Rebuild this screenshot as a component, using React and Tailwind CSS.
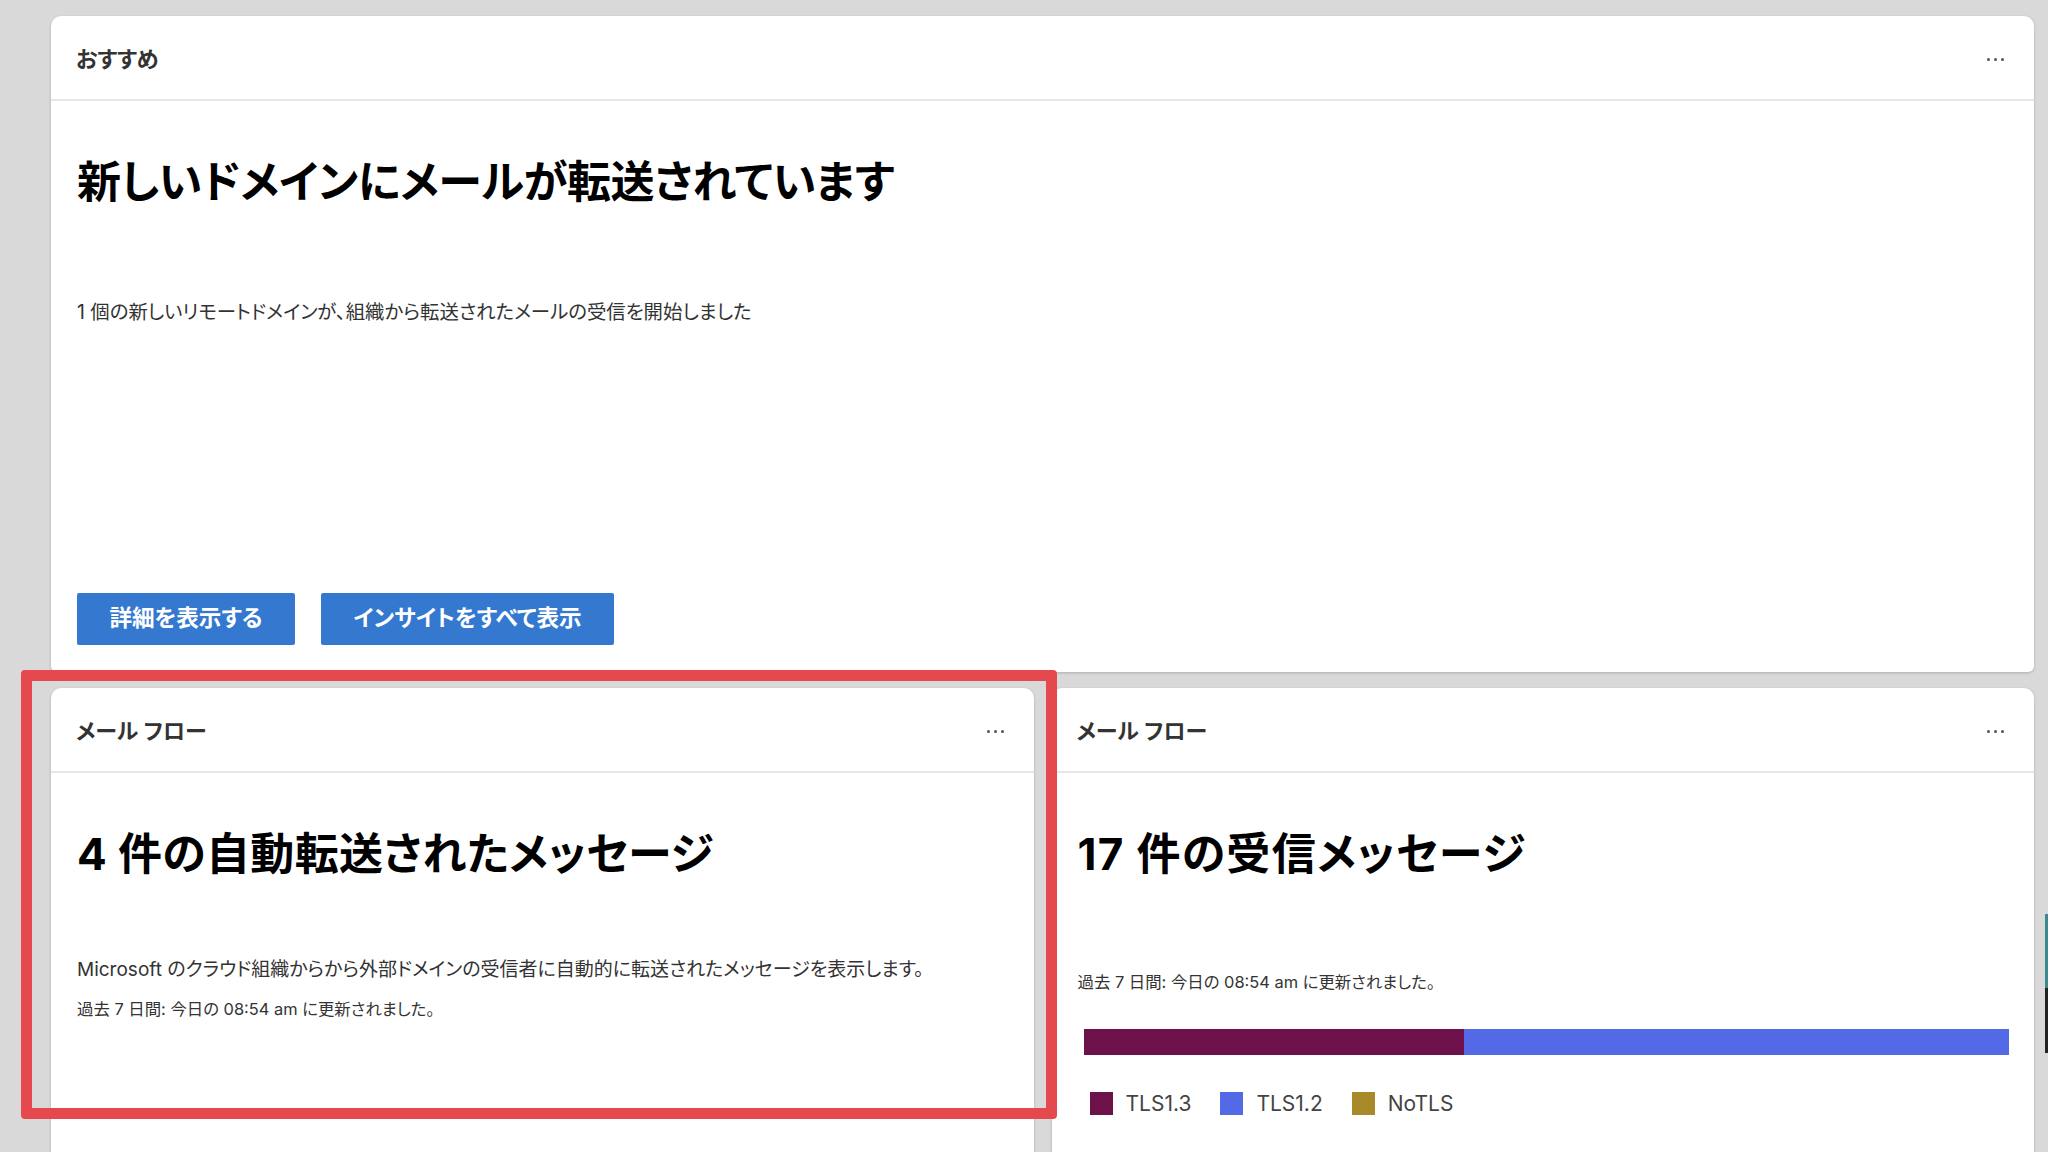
const FONT = "font-['Inter','Noto_Sans_CJK_JP',sans-serif] [font-feature-settings:'palt']"

function CardHeader({ title }) {
  return (
    <div className="flex h-[85px] shrink-0 items-center justify-between border-b-2 border-[#e8e8e8] pl-[25px] pr-[30px]">
      <h2 className="pt-[3px] text-[22px] leading-none font-bold text-[#333333]">{title}</h2>
      <div className="mt-[3px] flex gap-[4px]">
        <span className="h-[3px] w-[3px] rounded-full bg-[#555555]" />
        <span className="h-[3px] w-[3px] rounded-full bg-[#555555]" />
        <span className="h-[3px] w-[3px] rounded-full bg-[#555555]" />
      </div>
    </div>
  )
}

function Legend({ color, label }) {
  return (
    <div className="flex items-center gap-[13px]">
      <span className={`h-[23px] w-[23px] ${color}`} />
      <span className="text-[21px] leading-none text-[#444444]">{label}</span>
    </div>
  )
}

export default function App() {
  return (
    <div className={`relative h-screen overflow-hidden bg-[#d9d9d9] pt-[16px] pl-[51px] pr-[14px] ${FONT}`}>
      <section className="flex h-[656px] flex-col rounded-t-[10px] rounded-b-[6px] bg-white shadow-[0_1px_3px_rgba(0,0,0,0.2)]">
        <CardHeader title="おすすめ" />
        <div className="flex flex-1 flex-col pl-[26px]">
          <h1 className="mt-[55px] text-[44px] leading-[52px] font-bold tracking-[-0.4px] text-black">新しいドメインにメールが転送されています</h1>
          <p className="mt-[91px] text-[19.4px] leading-[26px] text-[#333333]">1 個の新しいリモートドメインが、組織から転送されたメールの受信を開始しました</p>
          <div className="mt-[268px] flex gap-[26px]">
            <button type="button" className="h-[52px] w-[218px] rounded-[2px] bg-[#3578d0] pb-[3px] text-[22.6px] font-bold text-white">詳細を表示する</button>
            <button type="button" className="h-[52px] w-[293px] rounded-[2px] bg-[#3578d0] pb-[3px] text-[22.6px] font-bold text-white">インサイトをすべて表示</button>
          </div>
        </div>
      </section>

      <div className="mt-[16px] grid grid-cols-2 gap-[18px]">
        <section className="flex h-[470px] flex-col rounded-t-[10px] bg-white shadow-[0_1px_3px_rgba(0,0,0,0.2)]">
          <CardHeader title="メール フロー" />
          <div className="flex flex-col pl-[26px]">
            <h1 className="mt-[55px] text-[44px] leading-[52px] font-bold tracking-[0.35px] text-black">4 件の自動転送されたメッセージ</h1>
            <p className="mt-[77px] text-[19px] leading-[26px] text-[#333333]">Microsoft のクラウド組織からから外部ドメインの受信者に自動的に転送されたメッセージを表示します。</p>
            <p className="mt-[14px] text-[16.4px] leading-[24px] text-[#333333]">過去 7 日間: 今日の 08:54 am に更新されました。</p>
          </div>
        </section>

        <section className="flex h-[470px] flex-col rounded-t-[10px] bg-white shadow-[0_1px_3px_rgba(0,0,0,0.2)]">
          <CardHeader title="メール フロー" />
          <div className="flex flex-col pl-[26px] pr-[25px]">
            <h1 className="mt-[55px] text-[44px] leading-[52px] font-bold tracking-[1.3px] text-black">17 件の受信メッセージ</h1>
            <p className="mt-[90px] text-[16.4px] leading-[24px] text-[#333333]">過去 7 日間: 今日の 08:54 am に更新されました。</p>
            <div className="mt-[35px] ml-[6px] flex h-[26px]">
              <div className="w-[380px] bg-[#6c1149]" />
              <div className="flex-1 bg-[#5469e6]" />
            </div>
            <div className="mt-[37px] ml-[12px] flex gap-[29px]">
              <Legend color="bg-[#6c1149]" label="TLS1.3" />
              <Legend color="bg-[#5469e6]" label="TLS1.2" />
              <Legend color="bg-[#a98a2b]" label="NoTLS" />
            </div>
          </div>
        </section>
      </div>

      {/* annotation drawn over the screenshot */}
      <div className="absolute top-[670px] left-[21px] h-[449px] w-[1036px] rounded-[4px] border-[11px] border-[#e5484d]" />

      {/* sliver of the window behind, at the right edge */}
      <div className="absolute top-[914px] right-0 flex w-[3px] flex-col">
        <div className="h-[74px] bg-[#3c8a90]" />
        <div className="h-[65px] bg-[#222222]" />
      </div>
    </div>
  )
}
